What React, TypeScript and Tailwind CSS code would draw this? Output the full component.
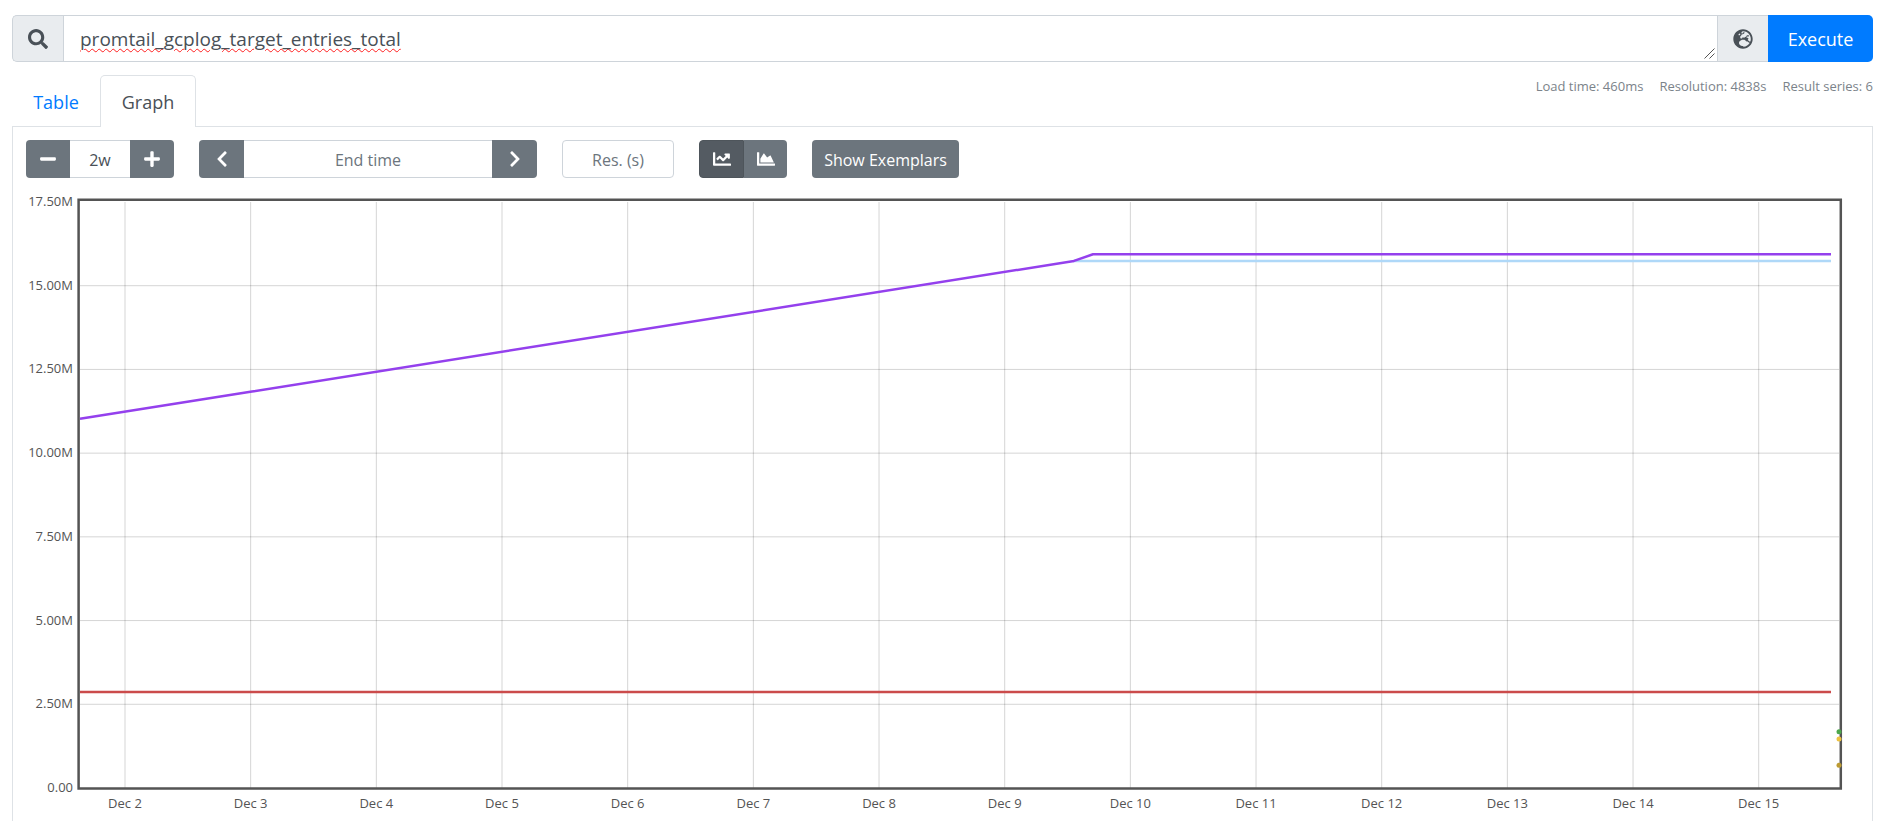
import { useState } from "react";
import {
  FaChartArea,
  FaChartLine,
  FaChevronLeft,
  FaChevronRight,
  FaGlobeEurope,
  FaMinus,
  FaPlus,
  FaSearch,
} from "react-icons/fa";

const Y_MAX = 17.5;
const X_MAX = 1759;
const yPct = (v: number) => `${100 - (v / Y_MAX) * 100}%`;
const xPct = (v: number) => `${(v / X_MAX) * 100}%`;

const yTicks = [17.5, 15, 12.5, 10, 7.5, 5, 2.5, 0];
const days = Array.from({ length: 14 }, (_, i) => i + 2);
const dayX = (day: number) => 45 + (day - 2) * 125.67;
const path = (pts: number[][]) =>
  pts.map(([x, v]) => `${x},${((Y_MAX - v) / Y_MAX) * 586}`).join(" ");

const series = [
  { color: "#afd8f8", points: [[993, 15.74], [1751, 15.74]] },
  { color: "#cb4b4b", points: [[0, 2.87], [1751, 2.87]] },
  {
    color: "#9440ed",
    points: [[0, 11.03], [172, 11.84], [994, 15.74], [1013, 15.94], [1751, 15.94]],
  },
];

const samples = [
  { color: "#4da74d", value: 1.68 },
  { color: "#edc240", value: 1.46 },
  { color: "#bd9b33", value: 0.68 },
];

function Chart() {
  return (
    <div className="pt-6 pr-[33px] pb-12 pl-[67px]">
      <svg role="img" aria-label="Entries over time" className="block h-[586px] w-full overflow-visible">
        {days.map((d) => (
          <line key={d} x1={xPct(dayX(d))} x2={xPct(dayX(d))} y1="0" y2="100%" stroke="#000" strokeOpacity="0.17" />
        ))}
        {yTicks.slice(1, -1).map((v) => (
          <line key={v} x1="0" x2="100%" y1={yPct(v)} y2={yPct(v)} stroke="#000" strokeOpacity="0.17" />
        ))}
        <svg width="100%" height="100%" viewBox="0 0 1759 586" preserveAspectRatio="none" className="overflow-visible">
          <rect x="-1.4" y="-2.25" width="1762.2" height="588.75" fill="none" stroke="#545454" strokeWidth="2.5" vectorEffect="non-scaling-stroke" />
          {series.map((s) => (
            <polyline key={s.color} points={path(s.points)} fill="none" stroke={s.color} strokeWidth="2.5" strokeLinejoin="round" vectorEffect="non-scaling-stroke" />
          ))}
        </svg>
        {samples.map((s) => (
          <circle key={s.color} cx="100%" cy={yPct(s.value)} r="2.5" fill={s.color} />
        ))}
        <g className="fill-[#545454] text-[13px]">
          {yTicks.map((v) => (
            <text key={v} x="-7" y={yPct(v)} dy="4" textAnchor="end">
              {v === 0 ? "0.00" : `${v.toFixed(2)}M`}
            </text>
          ))}
          {days.map((d) => (
            <text key={d} x={xPct(dayX(d))} y="100%" dy="20" textAnchor="middle">
              {`Dec ${d}`}
            </text>
          ))}
        </g>
      </svg>
    </div>
  );
}

const grayButton =
  "flex items-center justify-center bg-[#6c757d] text-white";

export default function App() {
  const [expr, setExpr] = useState("promtail_gcplog_target_entries_total");
  const [range, setRange] = useState("2w");
  return (
    <main className="min-h-screen overflow-hidden bg-white pt-[15px] pr-1 pl-3 font-['Open_Sans','Noto_Sans',sans-serif] text-[#495057]">
      <div className="flex h-[47px]">
        <label htmlFor="expr" className="flex w-[51px] items-center justify-center rounded-l-[5px] border border-r-0 border-[#ced4da] bg-[#e9ecef]">
          <FaSearch className="size-5" aria-label="Expression" />
        </label>
        <div className="relative flex min-w-0 flex-1 border border-[#ced4da]">
          <textarea
            id="expr"
            rows={1}
            spellCheck={false}
            value={expr}
            onChange={(e) => setExpr(e.target.value)}
            className="w-full resize-none overflow-hidden px-4 py-2 text-[19px] leading-[30px] underline decoration-[#ff2020] decoration-wavy decoration-1 underline-offset-2 outline-none"
          />
          <svg className="pointer-events-none absolute right-[2px] bottom-[2px] size-[11px]" viewBox="0 0 11 11" stroke="#555" aria-hidden="true">
            <path d="M0.5 10.5 10.5 0.5M5.5 10.5 10.5 5.5" />
          </svg>
        </div>
        <button aria-label="Open metrics explorer" className="flex w-[50px] items-center justify-center border-y border-[#ced4da] bg-[#e9ecef]">
          <FaGlobeEurope className="size-5" />
        </button>
        <button className="w-[105px] rounded-r-[5px] bg-[#007bff] text-lg text-white">Execute</button>
      </div>

      <div className="mt-[13px] flex items-start justify-between text-lg">
        <nav className="relative z-10 -mb-px flex">
          <a href="#table" className="flex h-[52px] w-[88px] items-center justify-center pt-px text-[#007bff]">Table</a>
          <a href="#graph" className="flex h-[52px] w-24 items-center justify-center rounded-t-[5px] border border-b-0 border-[#dee2e6] bg-white">Graph</a>
        </nav>
        <div className="flex gap-4 text-[13px] leading-[22px] text-[#7b838a]">
          <span>Load time: 460ms</span>
          <span>Resolution: 4838s</span>
          <span>Result series: 6</span>
        </div>
      </div>

      <section className="border border-b-0 border-[#dee2e6]">
        <div className="flex h-[51px] items-end gap-[25px] pl-[13px] text-base">
          <div className="flex h-[38px]">
            <button aria-label="Decrease range" className={`${grayButton} w-11 rounded-l`}>
              <FaMinus className="size-[18px]" />
            </button>
            <input aria-label="Range" value={range} onChange={(e) => setRange(e.target.value)} className="w-[60px] border-y border-[#ced4da] pt-px text-center outline-none" />
            <button aria-label="Increase range" className={`${grayButton} w-11 rounded-r`}>
              <FaPlus className="size-[18px]" />
            </button>
          </div>
          <div className="flex h-[38px]">
            <button aria-label="Decrease end time" className={`${grayButton} w-[45px] rounded-l`}>
              <FaChevronLeft className="size-[18px]" />
            </button>
            <input aria-label="End time" placeholder="End time" className="w-[248px] border-y border-[#ced4da] pt-px text-center outline-none placeholder:text-[#6c757d]" />
            <button aria-label="Increase end time" className={`${grayButton} w-[45px] rounded-r`}>
              <FaChevronRight className="size-[18px]" />
            </button>
          </div>
          <input aria-label="Resolution in seconds" placeholder="Res. (s)" className="h-[38px] w-28 rounded border border-[#ced4da] pt-px text-center outline-none placeholder:text-[#6c757d]" />
          <div className="flex h-[38px]">
            <button aria-label="Show unstacked line graph" className="flex w-[45px] items-center justify-center rounded-l border border-[#4e555b] bg-[#545b62] text-white">
              <FaChartLine className="size-[18px]" />
            </button>
            <button aria-label="Show stacked graph" className={`${grayButton} w-[43px] rounded-r`}>
              <FaChartArea className="size-[18px]" />
            </button>
          </div>
          <button className={`${grayButton} h-[38px] w-[147px] rounded pt-px`}>Show Exemplars</button>
        </div>
        <Chart />
      </section>
    </main>
  );
}
